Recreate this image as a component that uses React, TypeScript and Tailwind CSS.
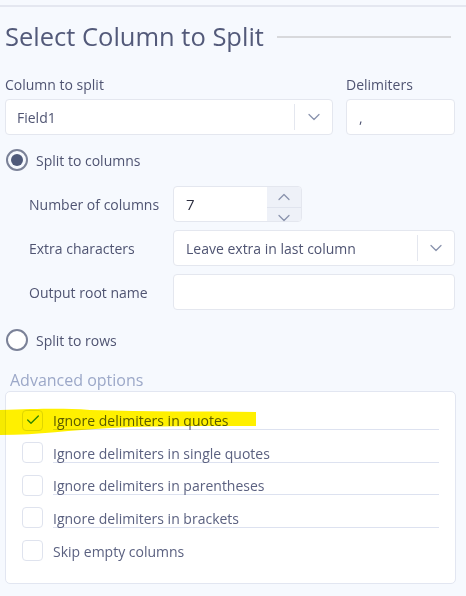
import { ChevronDown, ChevronUp, Check } from 'lucide-react';

const font = { fontFamily: '"Open Sans", "Noto Sans", sans-serif' };

function Chevron() {
  return <ChevronDown className="w-5 h-5 text-[#8a93ad]" strokeWidth={1.5} />;
}

function CheckRow({ label, checked, underline }: { label: string; checked?: boolean; underline?: boolean }) {
  return (
    <div className="flex items-center h-[32.5px] pl-4 pr-4">
      <div className="w-[21px] h-[21px] rounded-[4px] border border-[#dfe3ee] bg-white flex items-center justify-center shrink-0">
        {checked && <Check className="w-4 h-4 text-[#2f8f3a]" strokeWidth={2} />}
      </div>
      <div className={`ml-[10px] flex-1 h-[20px] flex items-center ${underline ? 'border-b border-[#dde2f0]' : ''}`}>
        <span className="text-[14px] text-[#5b6180] relative top-[1px]">{label}</span>
      </div>
    </div>
  );
}

export default function App() {
  return (
    <div className="w-[466px] h-[596px] bg-[#f6f9fe] overflow-hidden relative" style={font}>
      <div className="h-[5px]" />
      <div className="h-[2px] bg-[#e4e7f0]" />

      {/* Title */}
      <div className="flex items-center px-[5px] mt-[14px] h-[32px]">
        <h1 className="text-[25.5px] text-[#535a7a] leading-none whitespace-nowrap">Select Column to Split</h1>
        <div className="flex-1 h-[2px] bg-[#d8d9dc] ml-[13px] mr-[10px]" />
      </div>

      {/* Column / delimiters */}
      <div className="flex px-[5px] mt-[22px] gap-[13px]">
        <div className="w-[328px]">
          <div className="text-[14px] text-[#4f5472] h-[20px] leading-[20px]">Column to split</div>
          <div className="mt-[4px] h-[36px] bg-white border border-[#e4e7ef] rounded-[4px] flex items-center">
            <span className="flex-1 pl-[11px] text-[14px] text-[#4f5472]">Field1</span>
            <div className="w-px h-[26px] bg-[#e4e7ef]" />
            <div className="w-[37px] flex justify-center"><Chevron /></div>
          </div>
        </div>
        <div className="flex-1 mr-[6px]">
          <div className="text-[14px] text-[#4f5472] h-[20px] leading-[20px]">Delimiters</div>
          <div className="mt-[4px] h-[36px] bg-white border border-[#e4e7ef] rounded-[4px] flex items-center pl-[12px] text-[14px] text-[#4f5472]">,</div>
        </div>
      </div>

      {/* Split to columns */}
      <div className="flex items-center px-[6px] mt-[13px] h-[24px]">
        <div className="w-[22px] h-[22px] rounded-full border-2 border-[#7b8298] flex items-center justify-center">
          <div className="w-[12px] h-[12px] rounded-full bg-[#4f5a7a]" />
        </div>
        <span className="ml-[8px] text-[14px] text-[#4f5472]">Split to columns</span>
      </div>

      <div className="pl-[29px] pr-[11px] mt-[14px] flex flex-col gap-[8px]">
        <div className="flex items-center">
          <span className="w-[144px] text-[14px] text-[#4f5472]">Number of columns</span>
          <div className="w-[129px] h-[36px] bg-white border border-[#e4e7ef] rounded-[4px] flex">
            <span className="flex-1 flex items-center pl-[12px] text-[15px] text-[#2d2f40]">7</span>
            <div className="w-[34px] bg-[#eef1f8] flex flex-col rounded-r-[3px]">
              <div className="flex-1 flex items-center justify-center border-b border-[#e0e4ee]"><ChevronUp className="w-5 h-5 text-[#8a93ad]" strokeWidth={1.5} /></div>
              <div className="flex-1 flex items-center justify-center"><ChevronDown className="w-5 h-5 text-[#8a93ad]" strokeWidth={1.5} /></div>
            </div>
          </div>
        </div>
        <div className="flex items-center">
          <span className="w-[144px] text-[14px] text-[#4f5472]">Extra characters</span>
          <div className="flex-1 h-[36px] bg-white border border-[#e4e7ef] rounded-[4px] flex items-center">
            <span className="flex-1 pl-[12px] text-[14px] text-[#4f5472]">Leave extra in last column</span>
            <div className="w-px h-[26px] bg-[#e4e7ef]" />
            <div className="w-[36px] flex justify-center"><Chevron /></div>
          </div>
        </div>
        <div className="flex items-center">
          <span className="w-[144px] text-[14px] text-[#4f5472]">Output root name</span>
          <div className="flex-1 h-[36px] bg-white border border-[#e4e7ef] rounded-[4px]" />
        </div>
      </div>

      {/* Split to rows */}
      <div className="flex items-center px-[6px] mt-[18px] h-[24px]">
        <div className="w-[22px] h-[22px] rounded-full border-2 border-[#7b8298] bg-white" />
        <span className="ml-[8px] text-[14px] text-[#4f5472]">Split to rows</span>
      </div>

      {/* Advanced options */}
      <div className="px-[10px] mt-[18px] text-[16px] leading-[20px] text-[#9ca8c8]">Advanced options</div>
      <div className="mx-[5px] mt-[1px] w-[451px] h-[193px] bg-white border border-[#e2e6f1] rounded-[5px] pt-[12px] relative">
        <CheckRow label="Ignore delimiters in quotes" checked underline />
        <CheckRow label="Ignore delimiters in single quotes" underline />
        <CheckRow label="Ignore delimiters in parentheses" underline />
        <CheckRow label="Ignore delimiters in brackets" underline />
        <CheckRow label="Skip empty columns" />
      </div>

      {/* highlighter stroke */}
      <svg className="absolute left-0 top-[405px] mix-blend-multiply pointer-events-none" width="260" height="34" viewBox="0 0 260 34">
        <path d="M0 5 C40 4 60 3 90 5 C150 7 200 6 256 7 L256 21 C200 21 150 21 110 23 C70 25 40 30 0 30 Z" fill="#fff000" />
      </svg>
    </div>
  );
}
